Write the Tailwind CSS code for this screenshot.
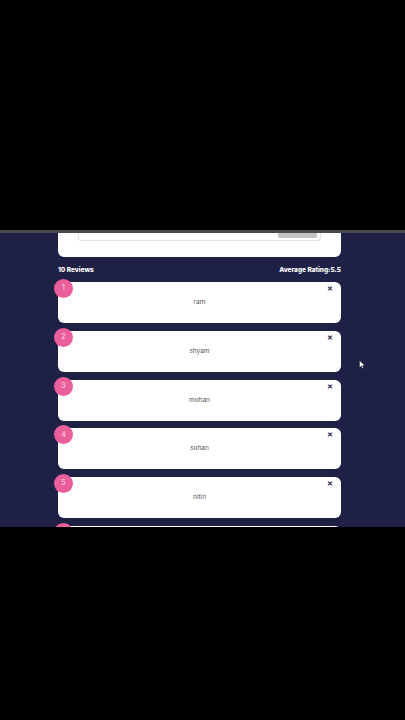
<!DOCTYPE html>
<html lang="en">
<head>
  <meta charset="UTF-8">
  <meta name="viewport" content="width=device-width, initial-scale=1.0">
  <title>Reviews</title>
  <script src="https://cdn.jsdelivr.net/npm/@tailwindcss/browser@4"></script>
</head>
<body class="bg-black font-['Inter',sans-serif]">
  <div class="h-[720px] w-[405px] overflow-hidden bg-black pt-[230px]">
    <div class="h-[3px] bg-[#4a4a4d]"></div>
    <div class="relative h-[294px] overflow-hidden bg-[#1f2046] pl-[58px] pr-[64px]">
      <!-- form card, scrolled off the top -->
      <div class="h-[24px] rounded-b-[6px] bg-white px-[20px]">
        <div class="flex h-[8px] justify-end rounded-b-[3px] border border-t-0 border-[#e4e4e4] pr-[3px]">
          <div class="h-[5px] w-[39px] rounded-b-[2px] bg-[#c4c4c4]"></div>
        </div>
      </div>

      <div class="mt-[7px] flex h-[13px] items-center justify-between text-[6.5px] font-extrabold text-white">
        <span>10 Reviews</span>
        <span>Average Rating:5.5</span>
      </div>

      <!-- review list -->
      <div class="mt-[5px] flex flex-col gap-[7.75px]">
        <div class="relative flex h-[41px] items-center justify-center rounded-[6px] bg-white pt-[1px] text-[6.5px] text-[#555]">
          <span class="absolute top-[-3px] left-[-4px] flex h-[19px] w-[19px] items-center justify-center rounded-full bg-[#ea5f9b] text-[7px] text-white/80">1</span>
          <span>ram</span>
          <span class="absolute top-[2px] right-[8px] text-[7px] leading-[10px] font-bold text-[#1f2046]">✕</span>
        </div>
        <div class="relative flex h-[41px] items-center justify-center rounded-[6px] bg-white pt-[1px] text-[6.5px] text-[#555]">
          <span class="absolute top-[-3px] left-[-4px] flex h-[19px] w-[19px] items-center justify-center rounded-full bg-[#ea5f9b] text-[7px] text-white/80">2</span>
          <span>shyam</span>
          <span class="absolute top-[2px] right-[8px] text-[7px] leading-[10px] font-bold text-[#1f2046]">✕</span>
        </div>
        <div class="relative flex h-[41px] items-center justify-center rounded-[6px] bg-white pt-[1px] text-[6.5px] text-[#555]">
          <span class="absolute top-[-3px] left-[-4px] flex h-[19px] w-[19px] items-center justify-center rounded-full bg-[#ea5f9b] text-[7px] text-white/80">3</span>
          <span>mohan</span>
          <span class="absolute top-[2px] right-[8px] text-[7px] leading-[10px] font-bold text-[#1f2046]">✕</span>
        </div>
        <div class="relative flex h-[41px] items-center justify-center rounded-[6px] bg-white pt-[1px] text-[6.5px] text-[#555]">
          <span class="absolute top-[-3px] left-[-4px] flex h-[19px] w-[19px] items-center justify-center rounded-full bg-[#ea5f9b] text-[7px] text-white/80">4</span>
          <span>sohan</span>
          <span class="absolute top-[2px] right-[8px] text-[7px] leading-[10px] font-bold text-[#1f2046]">✕</span>
        </div>
        <div class="relative flex h-[41px] items-center justify-center rounded-[6px] bg-white pt-[1px] text-[6.5px] text-[#555]">
          <span class="absolute top-[-3px] left-[-4px] flex h-[19px] w-[19px] items-center justify-center rounded-full bg-[#ea5f9b] text-[7px] text-white/80">5</span>
          <span>nitin</span>
          <span class="absolute top-[2px] right-[8px] text-[7px] leading-[10px] font-bold text-[#1f2046]">✕</span>
        </div>
        <div class="relative h-[41px] rounded-[6px] bg-white">
          <span class="absolute top-[-3px] left-[-4px] h-[19px] w-[19px] rounded-full bg-[#ea5f9b]"></span>
        </div>
      </div>

      <!-- mouse pointer -->
      <svg class="absolute top-[127px] left-[359px] h-[9px] w-[7px]" viewBox="0 0 7 9">
        <path d="M0.5 0.5V7.5L2.2 6L3.4 8.5L4.6 8L3.4 5.6H5.8Z" fill="#fff" stroke="#222" stroke-width="0.5"/>
      </svg>
    </div>
  </div>
</body>
</html>
